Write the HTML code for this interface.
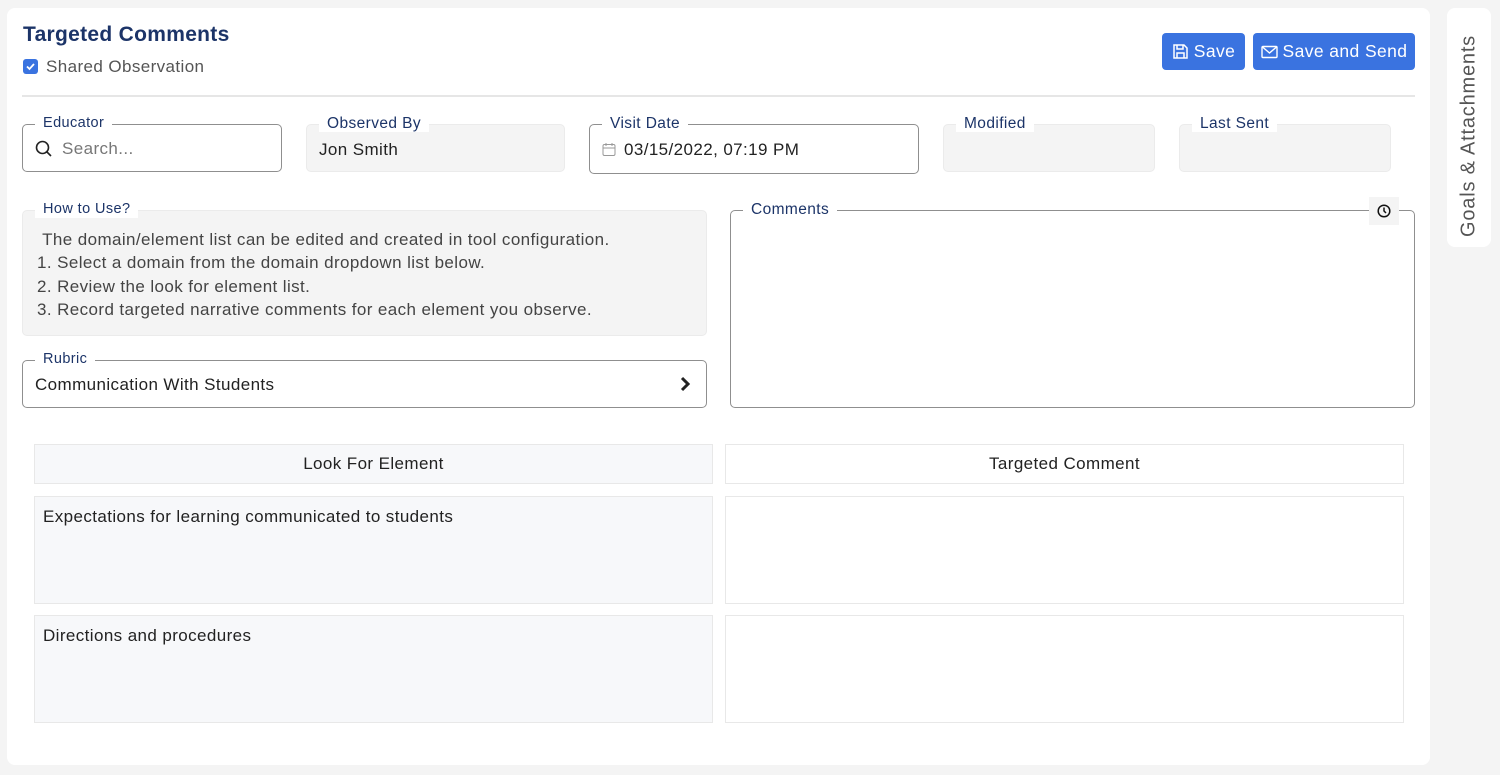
<!DOCTYPE html>
<html><head><style>
*{box-sizing:border-box;margin:0;padding:0}
body{width:1500px;height:775px;background:#f4f4f4;font-family:"Liberation Sans",sans-serif;position:relative;overflow:hidden;color:#222;letter-spacing:0.4px}
.a{position:absolute}
.card{left:7px;top:8px;width:1423px;height:757px;background:#fff;border-radius:8px}
.side{left:1447px;top:8px;width:44px;height:239px;background:#fff;border-radius:8px}
.lbl{position:absolute;top:-10px;background:#fff;padding:0 8px;font-size:14.5px;color:#1c3468;line-height:17px}
.bord{border:1.5px solid #8f8f8f;border-radius:5px}
.gray{background:#f4f4f4;border:1px solid #ebebeb;border-radius:5px}
.txt{font-size:17px;color:#222}
.btn{background:#3a73e0;color:#fff;border-radius:4px;font-size:17.5px;display:flex;align-items:center;justify-content:center;gap:5px}
.cell{border:1.5px solid #e8e8e8}
</style></head><body>
<div class="a card"></div>
<div class="a side"><div class="a" style="left:22px;top:128px;transform:translate(-50%,-50%) rotate(-90deg);white-space:nowrap;font-size:20px;color:#555;letter-spacing:0.8px">Goals &amp; Attachments</div></div>

<div class="a" style="left:23px;top:23px;font-size:21px;font-weight:bold;color:#1c3468;letter-spacing:0.3px">Targeted Comments</div>
<div class="a" style="left:23px;top:59px;width:15px;height:15px;background:#3a73e0;border-radius:3px"><svg width="15" height="15"><path d="M4 7.5l2.5 2.5 4.5-5" stroke="#fff" stroke-width="1.8" fill="none"/></svg></div>
<div class="a" style="left:46px;top:57px;font-size:17px;color:#555">Shared Observation</div>

<div class="a btn" style="left:1162px;top:33px;width:83px;height:37px"><svg width="17" height="17" viewBox="0 0 17 17"><path d="M2 2h10l3 3v10H2z M5 2v4h6V2 M5 15v-5h7v5" stroke="#fff" stroke-width="1.5" fill="none"/></svg>Save</div>
<div class="a btn" style="left:1253px;top:33px;width:162px;height:37px"><svg width="17" height="14" viewBox="0 0 17 14"><rect x="1" y="1.5" width="15" height="11" stroke="#fff" stroke-width="1.4" fill="none" rx="1"/><path d="M1.5 2l7 6 7-6" stroke="#fff" stroke-width="1.4" fill="none"/></svg>Save and Send</div>

<div class="a" style="left:22px;top:95px;width:1393px;height:2px;background:#e6e6e6"></div>

<div class="a bord" style="left:22px;top:124px;width:260px;height:48px"><span class="lbl" style="left:12px">Educator</span>
<svg class="a" style="left:12px;top:15px" width="18" height="18"><circle cx="7.5" cy="7.5" r="6" stroke="#222" stroke-width="1.6" fill="none"/><path d="M12 12l4 4" stroke="#222" stroke-width="1.6"/></svg>
<span class="a" style="left:39px;top:14px;font-size:17px;color:#777">Search...</span></div>

<div class="a gray" style="left:306px;top:124px;width:259px;height:48px"><span class="lbl" style="left:12px;font-size:15.5px">Observed By</span><span class="a txt" style="left:12px;top:15px">Jon Smith</span></div>

<div class="a bord" style="left:589px;top:124px;width:330px;height:50px"><span class="lbl" style="left:12px;font-size:15.5px">Visit Date</span>
<svg class="a" style="left:12px;top:17px" width="14" height="15"><rect x="1" y="2.5" width="12" height="11" stroke="#999" fill="none" rx="1.5"/><path d="M1 6h12M4 1v3M10 1v3" stroke="#999"/></svg>
<span class="a txt" style="left:34px;top:15px">03/15/2022, 07:19 PM</span></div>

<div class="a gray" style="left:943px;top:124px;width:212px;height:48px"><span class="lbl" style="left:12px;font-size:15.5px">Modified</span></div>
<div class="a gray" style="left:1179px;top:124px;width:212px;height:48px"><span class="lbl" style="left:12px;font-size:15.5px">Last Sent</span></div>

<div class="a gray" style="left:22px;top:210px;width:685px;height:126px"><span class="lbl" style="left:12px">How to Use?</span>
<div class="a" style="left:14px;top:17px;font-size:17px;line-height:23.3px;color:#444">&nbsp;The domain/element list can be edited and created in tool configuration.<br>1. Select a domain from the domain dropdown list below.<br>2. Review the look for element list.<br>3. Record targeted narrative comments for each element you observe.</div></div>

<div class="a bord" style="left:730px;top:210px;width:685px;height:198px"><span class="lbl" style="left:12px;font-size:15.5px">Comments</span>
<div class="a" style="left:638px;top:-14px;width:30px;height:28px;background:#f4f4f4"><svg class="a" style="left:8px;top:7px" width="14" height="14"><circle cx="7" cy="7" r="5.8" stroke="#111" stroke-width="1.5" fill="none"/><path d="M7 3.5V7l2 2" stroke="#111" stroke-width="1.5" fill="none"/></svg></div></div>

<div class="a bord" style="left:22px;top:360px;width:685px;height:48px"><span class="lbl" style="left:12px">Rubric</span>
<span class="a txt" style="left:12px;top:14px">Communication With Students</span>
<svg class="a" style="left:655px;top:15px" width="14" height="16"><path d="M4 2l6 6-6 6" stroke="#222" stroke-width="3" fill="none"/></svg></div>

<div class="a cell" style="left:34px;top:444px;width:679px;height:40px;background:#f7f8fa;text-align:center;line-height:38px;font-size:17px">Look For Element</div>
<div class="a cell" style="left:725px;top:444px;width:679px;height:40px;text-align:center;line-height:38px;font-size:17px">Targeted Comment</div>
<div class="a cell" style="left:34px;top:496px;width:679px;height:108px;background:#f7f8fa;padding:10px 8px;font-size:17px">Expectations for learning communicated to students</div>
<div class="a cell" style="left:725px;top:496px;width:679px;height:108px"></div>
<div class="a cell" style="left:34px;top:615px;width:679px;height:108px;background:#f7f8fa;padding:10px 8px;font-size:17px">Directions and procedures</div>
<div class="a cell" style="left:725px;top:615px;width:679px;height:108px"></div>
</body></html>
